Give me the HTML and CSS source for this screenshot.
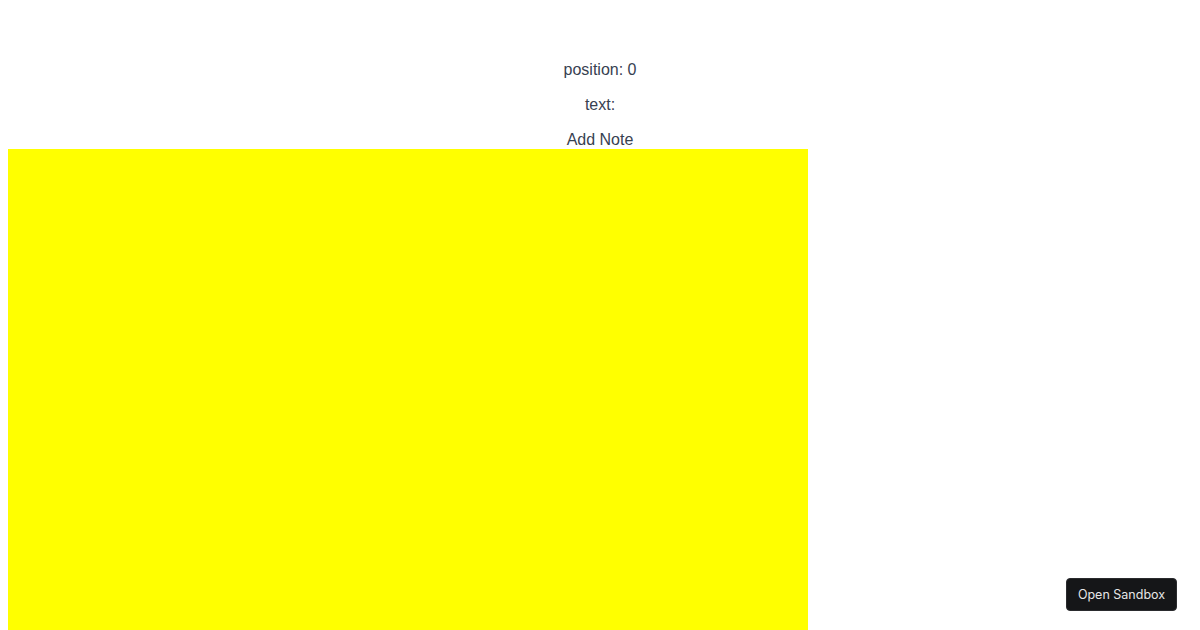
FILE: index.html
```html
<!DOCTYPE html>
<html>
<head>
<meta charset="utf-8">
<link rel="stylesheet" href="styles.css">
</head>
<body>
<div class="app">
  <div class="info">
    <p class="line">position: 0</p>
    <p class="line">text: </p>
    <div class="line add">Add Note</div>
  </div>
  <div class="canvas"></div>
</div>
<a class="sandbox">Open Sandbox</a>
</body>
</html>
```

FILE: styles.css
```css
html, body {
  margin: 0;
  padding: 0;
  background: #ffffff;
  overflow: hidden;
}
body {
  font-family: "Liberation Sans", Arial, sans-serif;
  font-size: 16px;
  color: #374151;
}
.app {
  padding: 61px 0 0 8px;
}
.info {
  display: flex;
  flex-direction: column;
  align-items: center;
  gap: 17px;
  margin-left: -8px;
}
.line {
  margin: 0;
  line-height: 18px;
  height: 18px;
}
.add {
  cursor: pointer;
}
.canvas {
  width: 800px;
  height: 481px;
  background: #ffff00;
}
.sandbox {
  position: fixed;
  right: 23px;
  bottom: 19px;
  box-sizing: border-box;
  width: 111px;
  height: 33px;
  display: flex;
  align-items: center;
  justify-content: center;
  background: #151618;
  border: 1px solid #2a2b2e;
  border-radius: 4px;
  color: #e6e6e6;
  font-family: Inter, "Liberation Sans", sans-serif;
  font-size: 12.5px;
  letter-spacing: 0;
}
```
